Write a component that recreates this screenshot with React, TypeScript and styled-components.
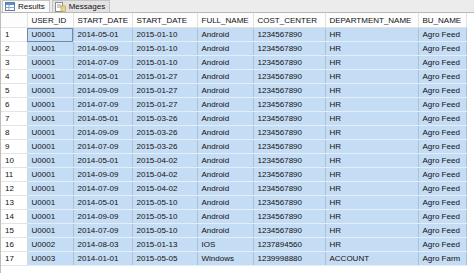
import React from "react";
import { styled, createGlobalStyle } from "styled-components";

const rows = [
  ["U0001", "2014-05-01", "2015-01-10", "Android", "1234567890", "HR", "Agro Feed"],
  ["U0001", "2014-09-09", "2015-01-10", "Android", "1234567890", "HR", "Agro Feed"],
  ["U0001", "2014-07-09", "2015-01-10", "Android", "1234567890", "HR", "Agro Feed"],
  ["U0001", "2014-05-01", "2015-01-27", "Android", "1234567890", "HR", "Agro Feed"],
  ["U0001", "2014-09-09", "2015-01-27", "Android", "1234567890", "HR", "Agro Feed"],
  ["U0001", "2014-07-09", "2015-01-27", "Android", "1234567890", "HR", "Agro Feed"],
  ["U0001", "2014-05-01", "2015-03-26", "Android", "1234567890", "HR", "Agro Feed"],
  ["U0001", "2014-09-09", "2015-03-26", "Android", "1234567890", "HR", "Agro Feed"],
  ["U0001", "2014-07-09", "2015-03-26", "Android", "1234567890", "HR", "Agro Feed"],
  ["U0001", "2014-05-01", "2015-04-02", "Android", "1234567890", "HR", "Agro Feed"],
  ["U0001", "2014-09-09", "2015-04-02", "Android", "1234567890", "HR", "Agro Feed"],
  ["U0001", "2014-07-09", "2015-04-02", "Android", "1234567890", "HR", "Agro Feed"],
  ["U0001", "2014-05-01", "2015-05-10", "Android", "1234567890", "HR", "Agro Feed"],
  ["U0001", "2014-09-09", "2015-05-10", "Android", "1234567890", "HR", "Agro Feed"],
  ["U0001", "2014-07-09", "2015-05-10", "Android", "1234567890", "HR", "Agro Feed"],
  ["U0002", "2014-08-03", "2015-01-13", "IOS", "1237894560", "HR", "Agro Feed"],
  ["U0003", "2014-01-01", "2015-05-05", "Windows", "1239998880", "ACCOUNT", "Agro Farm"],
];

const columns = [
  { name: "", width: 26 },
  { name: "USER_ID", width: 46 },
  { name: "START_DATE", width: 59 },
  { name: "START_DATE", width: 65 },
  { name: "FULL_NAME", width: 56 },
  { name: "COST_CENTER", width: 72 },
  { name: "DEPARTMENT_NAME", width: 93 },
  { name: "BU_NAME", width: 48 },
];

const GridIcon = () => (
  <svg width="10" height="9" viewBox="0 0 10 9">
    <rect x="0.5" y="0.5" width="9" height="8" fill="#fff" stroke="#5b7fa8" />
    <rect x="1" y="1" width="8" height="2" fill="#5b8fd0" />
    <line x1="0.5" y1="5.5" x2="9.5" y2="5.5" stroke="#8aa6c6" />
    <line x1="4" y1="3" x2="4" y2="8.5" stroke="#8aa6c6" />
  </svg>
);

const MessageIcon = () => (
  <svg width="11" height="10" viewBox="0 0 11 10">
    <rect x="0.5" y="0.5" width="7" height="9" fill="#fff" stroke="#8c8c8c" />
    <line x1="2" y1="3" x2="6" y2="3" stroke="#a0a0a0" />
    <line x1="2" y1="5" x2="6" y2="5" stroke="#a0a0a0" />
    <rect x="6" y="4" width="4.5" height="5.5" fill="#e8d58a" stroke="#b09a50" strokeWidth="0.6" />
  </svg>
);

export default function App() {
  return (
    <>
      <GlobalStyle />
      <Page>
        <TabBar>
          <Tab $active>
            <GridIcon />
            Results
          </Tab>
          <Tab>
            <MessageIcon />
            Messages
          </Tab>
        </TabBar>
        <Table>
          <colgroup>
            {columns.map((c, i) => (
              <col key={i} style={{ width: c.width }} />
            ))}
          </colgroup>
          <thead>
            <tr>
              {columns.map((c, i) => (
                <HeadCell key={i}>{c.name}</HeadCell>
              ))}
            </tr>
          </thead>
          <tbody>
            {rows.map((r, i) => (
              <tr key={i}>
                <NumCell>{i + 1}</NumCell>
                {r.map((v, j) => (
                  <DataCell key={j} $focus={i === 0 && j === 0}>
                    {v}
                  </DataCell>
                ))}
              </tr>
            ))}
          </tbody>
        </Table>
      </Page>
    </>
  );
}

const GlobalStyle = createGlobalStyle`
  html, body {
    margin: 0;
    padding: 0;
    background: #ffffff;
  }
  body {
    font-family: "Liberation Sans", Arial, sans-serif;
    font-size: 8px;
    color: #111;
  }
`;

const Page = styled.div`
  width: 474px;
  height: 273px;
  overflow: hidden;
  background: #ffffff;
  border-left: 1px solid #bdbdbd;
  box-sizing: border-box;
`;

const TabBar = styled.div`
  display: flex;
  align-items: flex-end;
  height: 13px;
  background: #ececec;
  border-bottom: 1px solid #b8b8b8;
  box-sizing: border-box;
  padding-left: 1px;
  gap: 2px;
`;

const Tab = styled.div<{ $active?: boolean }>`
  display: flex;
  align-items: center;
  gap: 3px;
  height: 12px;
  padding: 0 4px 0 2px;
  font-size: 8px;
  color: #111;
  background: ${(p) => (p.$active ? "#fafafa" : "#e2e2e2")};
  border: 1px solid #c4c4c4;
  border-bottom: none;
  box-sizing: border-box;
`;

const Table = styled.table`
  border-collapse: collapse;
  table-layout: fixed;
  width: 465px;
`;

const HeadCell = styled.th`
  height: 14px;
  padding: 0 0 0 4px;
  text-align: left;
  font-weight: normal;
  font-size: 8px;
  color: #111;
  background: #fdfdfd;
  border-right: 1px solid #e2e2e2;
  border-bottom: 1px solid #e2e2e2;
  white-space: nowrap;
  overflow: hidden;
`;

const NumCell = styled.td`
  height: 14px;
  padding: 0 0 0 4px;
  box-sizing: border-box;
  background: #ffffff;
  color: #111;
  border-right: 1px solid #d8d8d8;
  border-bottom: 1px solid #e4e4e4;
`;

const DataCell = styled.td<{ $focus?: boolean }>`
  height: 14px;
  padding: 0 0 0 4px;
  box-sizing: border-box;
  white-space: nowrap;
  overflow: hidden;
  color: #111;
  background: #c4dcf4;
  border-right: 1px solid #a9c2da;
  border-bottom: 1px solid #e3eef9;
  outline: ${(p) => (p.$focus ? "1px solid #6f8aa6" : "none")};
  outline-offset: -1px;
`;
